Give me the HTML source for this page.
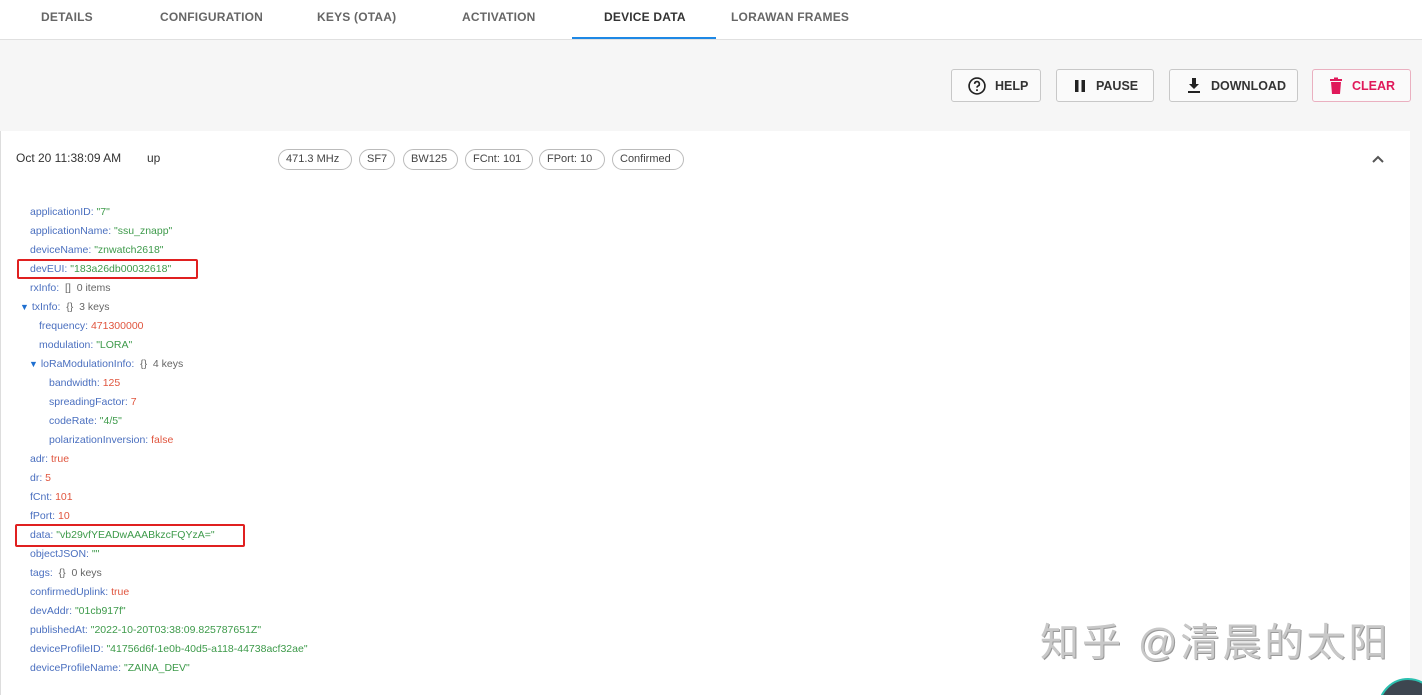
<!DOCTYPE html>
<html><head><meta charset="utf-8"><style>
*{margin:0;padding:0;box-sizing:border-box}
html,body{width:1422px;height:695px;overflow:hidden}
body{background:#f6f6f6;font-family:"Liberation Sans",sans-serif;position:relative}
.tabs{position:absolute;left:0;top:0;width:1422px;height:40px;background:#fff;border-bottom:1px solid #e0e0e0}
.tab{position:absolute;top:10px;font-size:12px;font-weight:bold;color:#666;letter-spacing:.2px}
.ul{position:absolute;left:572px;top:37px;width:144px;height:2px;background:#1e88e5}
.btn{position:absolute;top:69px;height:33px;border:1px solid #c8c8c8;border-radius:3px;background:#fafafa;font-size:12.5px;font-weight:bold;color:#333;display:flex;align-items:center;padding-left:15px}
.btn svg{margin-right:8px}
.card{position:absolute;left:0;top:131px;width:1410px;height:564px;background:#fff;border-left:1px solid #ddd}
.hdr{position:absolute;top:151px;font-size:12px;color:#333}
.chip{position:absolute;top:149px;height:21px;border:1px solid #bbb;border-radius:11px;font-size:11px;color:#444;padding:0 7px;line-height:19px}
.r{position:absolute;font-size:10.5px;color:#4a6fbf;white-space:nowrap}
.s{color:#3d9a4a}.n{color:#e0553e}.g{color:#666}
.box{position:absolute;border:2px solid #e02020;border-radius:2px}
.arr{font-size:9px;color:#1e6fd0}
.wm{position:absolute;left:1040px;top:612px;font-size:39px;color:#c8c8c8;font-family:"Liberation Sans","Noto Sans CJK SC",sans-serif;letter-spacing:3px;text-shadow:1px 1px 0 #999}
.clip{position:absolute;left:1370px;top:670px;width:52px;height:25px;overflow:hidden}
</style></head><body>
<div class="tabs">
<div class="tab" style="left:41px">DETAILS</div>
<div class="tab" style="left:160px">CONFIGURATION</div>
<div class="tab" style="left:317px">KEYS (OTAA)</div>
<div class="tab" style="left:462px">ACTIVATION</div>
<div class="tab" style="left:604px;color:#333">DEVICE DATA</div>
<div class="tab" style="left:731px">LORAWAN FRAMES</div>
<div class="ul"></div>
</div>
<div class="btn" style="left:951px;width:90px"><svg width="20" height="20" viewBox="0 0 24 24"><circle cx="12" cy="12" r="9.5" fill="none" stroke="#222" stroke-width="2"/><path d="M9.2 9.5a2.8 2.8 0 1 1 4 2.5c-.9.5-1.2 1-1.2 2" fill="none" stroke="#222" stroke-width="2"/><circle cx="12" cy="17" r="1.2" fill="#222"/></svg>HELP</div>
<div class="btn" style="left:1056px;width:98px"><svg width="16" height="16" viewBox="0 0 16 16"><rect x="3" y="2" width="3.5" height="12" fill="#222"/><rect x="9.5" y="2" width="3.5" height="12" fill="#222"/></svg>PAUSE</div>
<div class="btn" style="left:1169px;width:129px"><svg width="18" height="18" viewBox="0 0 18 18"><path d="M7 1h4v6h3l-5 5-5-5h3z" fill="#222"/><rect x="3" y="14" width="12" height="2" fill="#222"/></svg>DOWNLOAD</div>
<div class="btn" style="left:1312px;width:99px;border-color:#eab0c0;color:#e0195a"><svg width="16" height="18" viewBox="0 0 16 18"><rect x="2" y="2" width="12" height="2" fill="#e0195a"/><rect x="6" y="0.5" width="4" height="2" fill="#e0195a"/><path d="M3 5h10l-1 12H4z" fill="#e0195a"/></svg>CLEAR</div>
<div class="card"></div>
<div class="hdr" style="left:16px">Oct 20 11:38:09 AM</div>
<div class="hdr" style="left:147px">up</div>
<div class="chip" style="left:278px;width:74px">471.3 MHz</div>
<div class="chip" style="left:359px">SF7</div>
<div class="chip" style="left:403px;width:55px">BW125</div>
<div class="chip" style="left:465px;width:68px">FCnt: 101</div>
<div class="chip" style="left:539px;width:66px">FPort: 10</div>
<div class="chip" style="left:612px;width:72px">Confirmed</div>
<svg style="position:absolute;left:1371px;top:154px" width="14" height="10" viewBox="0 0 14 10"><path d="M2 8l5-5 5 5" fill="none" stroke="#555" stroke-width="2"/></svg>
<div class="r" style="left:30px;top:206px">applicationID: <span class="s">"7"</span></div>
<div class="r" style="left:30px;top:225px">applicationName: <span class="s">"ssu_znapp"</span></div>
<div class="r" style="left:30px;top:244px">deviceName: <span class="s">"znwatch2618"</span></div>
<div class="r" style="left:30px;top:263px">devEUI: <span class="s">"183a26db00032618"</span></div>
<div class="r" style="left:30px;top:282px">rxInfo: <span class="g">&nbsp;[]&nbsp; 0 items</span></div>
<div class="r" style="left:20px;top:301px"><span class="arr">▼</span> txInfo: <span class="g">&nbsp;{}&nbsp; 3 keys</span></div>
<div class="r" style="left:39px;top:320px">frequency: <span class="n">471300000</span></div>
<div class="r" style="left:39px;top:339px">modulation: <span class="s">"LORA"</span></div>
<div class="r" style="left:29px;top:358px"><span class="arr">▼</span> loRaModulationInfo: <span class="g">&nbsp;{}&nbsp; 4 keys</span></div>
<div class="r" style="left:49px;top:377px">bandwidth: <span class="n">125</span></div>
<div class="r" style="left:49px;top:396px">spreadingFactor: <span class="n">7</span></div>
<div class="r" style="left:49px;top:415px">codeRate: <span class="s">"4/5"</span></div>
<div class="r" style="left:49px;top:434px">polarizationInversion: <span class="n">false</span></div>
<div class="r" style="left:30px;top:453px">adr: <span class="n">true</span></div>
<div class="r" style="left:30px;top:472px">dr: <span class="n">5</span></div>
<div class="r" style="left:30px;top:491px">fCnt: <span class="n">101</span></div>
<div class="r" style="left:30px;top:510px">fPort: <span class="n">10</span></div>
<div class="r" style="left:30px;top:529px">data: <span class="s">"vb29vfYEADwAAABkzcFQYzA="</span></div>
<div class="r" style="left:30px;top:548px">objectJSON: <span class="s">""</span></div>
<div class="r" style="left:30px;top:567px">tags: <span class="g">&nbsp;{}&nbsp; 0 keys</span></div>
<div class="r" style="left:30px;top:586px">confirmedUplink: <span class="n">true</span></div>
<div class="r" style="left:30px;top:605px">devAddr: <span class="s">"01cb917f"</span></div>
<div class="r" style="left:30px;top:624px">publishedAt: <span class="s">"2022-10-20T03:38:09.825787651Z"</span></div>
<div class="r" style="left:30px;top:643px">deviceProfileID: <span class="s">"41756d6f-1e0b-40d5-a118-44738acf32ae"</span></div>
<div class="r" style="left:30px;top:662px">deviceProfileName: <span class="s">"ZAINA_DEV"</span></div>
<div class="box" style="left:17px;top:259px;width:181px;height:20px"></div>
<div class="box" style="left:15px;top:524px;width:230px;height:23px"></div>
<div class="wm">知乎 @清晨的太阳</div>
<div class="clip"><div style="position:absolute;left:8px;top:8px;width:60px;height:60px;border-radius:50%;background:#3d4650;border:2px solid #2cc0b0"></div></div>
</body></html>
